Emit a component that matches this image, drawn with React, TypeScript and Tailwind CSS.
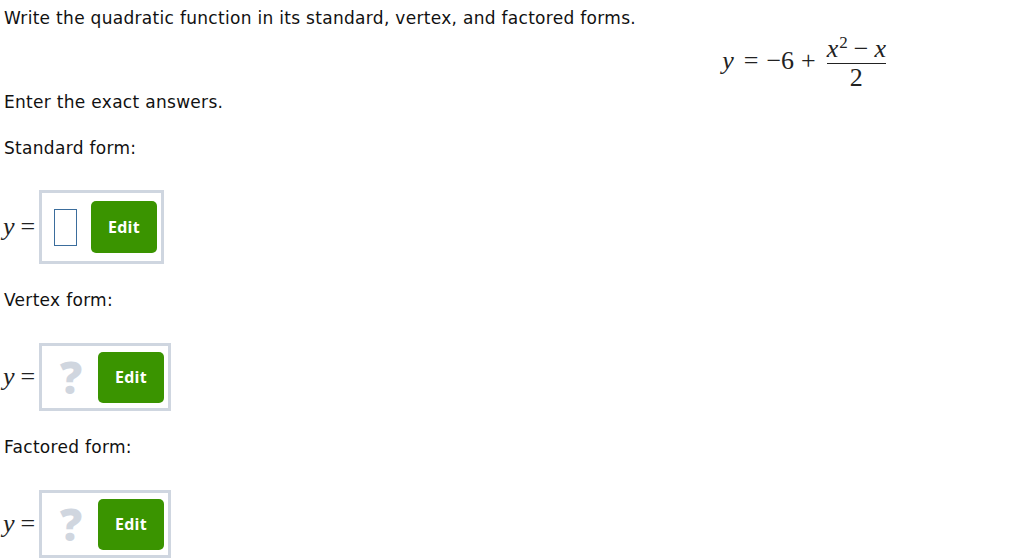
import React from 'react';

const serif = { fontFamily: '"Liberation Serif", "Times New Roman", serif' };

const EditButton = ({ className }: { className: string }) => (
  <button
    className={`bg-[#3a9400] rounded-[5px] text-white font-bold text-[16px] flex items-center justify-center ${className}`}
    style={{ fontFamily: '"Open Sans", Arial, sans-serif' }}
  >
    Edit
  </button>
);

const Answer = ({ filled }: { filled: boolean }) => (
  <div className="flex items-center">
    <span className="text-[26px] text-[#222] pl-[3px] w-[39px] whitespace-nowrap tracking-normal" style={serif}>
      <i>y</i>
      <span className="ml-[6px]">=</span>
    </span>
    {filled ? (
      <div className="border-[3px] border-[#cfd6e0] w-[125px] h-[74px] flex items-center pl-[12px] pr-[4px]">
        <div className="w-[23px] h-[37px] border-[1.5px] border-[#3b6d9c]"></div>
        <EditButton className="ml-[14px] w-[66px] h-[52px]" />
      </div>
    ) : (
      <div className="border-[3px] border-[#cfd6e0] w-[132px] h-[68px] flex items-center pl-[18px] pr-[4px]">
        <span
          className="text-[44px] font-extrabold text-[#d0d6df] w-[38px] leading-none"
          style={{ fontFamily: '"Open Sans", Arial, sans-serif' }}
        >
          ?
        </span>
        <EditButton className="w-[66px] h-[51px]" />
      </div>
    )}
  </div>
);

export default function App() {
  return (
    <div
      className="w-[1024px] h-[559px] bg-white overflow-hidden text-[17px] tracking-[0.3px] text-[#111] leading-[20px]"
      style={{ fontFamily: '"DejaVu Sans", Verdana, sans-serif' }}
    >
      <p className="pt-[8px] pl-[4px]">Write the quadratic function in its standard, vertex, and factored forms.</p>

      {/* equation */}
      <div className="flex justify-end pr-[138px] h-[63px] mt-[1px] tracking-normal" style={serif}>
        <div className="flex items-center text-[26px] text-[#222]">
          <i>y</i>
          <span className="ml-[10px] mr-[8px]">=</span>
          <span>−6</span>
          <span className="ml-[7px] mr-[11px]">+</span>
          <div className="flex flex-col items-center mt-[4px]">
            <span className="leading-[28px] whitespace-nowrap">
              <i>x</i>
              <sup className="text-[17px] ml-[1px]">2</sup>
              <span className="mx-[6px]">−</span>
              <i>x</i>
            </span>
            <span className="border-t-[1.5px] border-[#222] w-full text-center leading-[27px]">2</span>
          </div>
        </div>
      </div>

      <p className="pl-[4px]">Enter the exact answers.</p>
      <p className="pl-[4px] mt-[26px]">Standard form:</p>
      <div className="mt-[32px]">
        <Answer filled />
      </div>
      <p className="pl-[4px] mt-[26px]">Vertex form:</p>
      <div className="mt-[33px]">
        <Answer filled={false} />
      </div>
      <p className="pl-[4px] mt-[26px]">Factored form:</p>
      <div className="mt-[33px]">
        <Answer filled={false} />
      </div>
    </div>
  );
}
